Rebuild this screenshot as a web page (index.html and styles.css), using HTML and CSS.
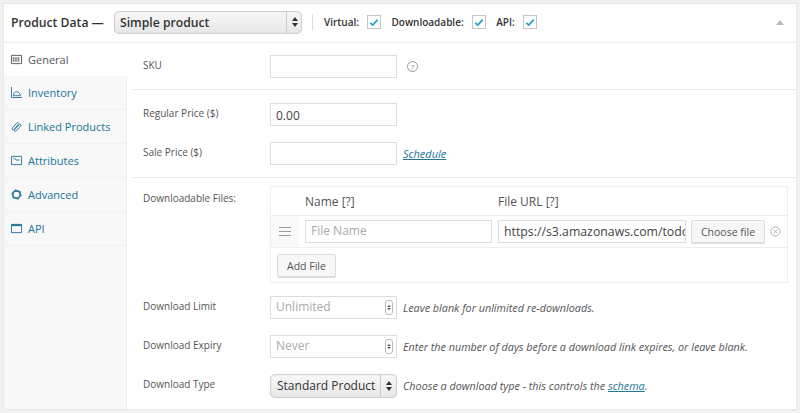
FILE: index.html
```html
<!DOCTYPE html>
<html lang="en">
<head>
  <meta charset="UTF-8">
  <title>Product Data</title>
  <link rel="stylesheet" href="styles.css">
</head>
<body>
  <div class="panel">
    <header class="panel-head">
      <span class="panel-title">Product Data —</span>
      <div class="select select-type">
        <span class="select-text">Simple product</span>
        <span class="select-arrows"><i class="up"></i><i class="down"></i></span>
      </div>
      <span class="head-sep"></span>
      <span class="check-label">Virtual:</span>
      <span class="check"><svg viewBox="0 0 12 10"><path d="M1.5 5.5 4.5 8.2 10.5 1.5"/></svg></span>
      <span class="check-label">Downloadable:</span>
      <span class="check"><svg viewBox="0 0 12 10"><path d="M1.5 5.5 4.5 8.2 10.5 1.5"/></svg></span>
      <span class="check-label">API:</span>
      <span class="check"><svg viewBox="0 0 12 10"><path d="M1.5 5.5 4.5 8.2 10.5 1.5"/></svg></span>
      <span class="collapse"></span>
    </header>
    <div class="panel-body">
      <ul class="tabs">
        <li class="tab active">
          <svg viewBox="0 0 12 12"><path class="ln" d="M.5 1.5h11v9H.5z"/><path class="ln" d="M2.5 3.5v5M4.5 3.5v5M6.5 3.5v5M8.5 3.5v5"/></svg>General
        </li>
        <li class="tab">
          <svg viewBox="0 0 12 12"><path class="ln" d="M.5 0v11.5H12"/><path class="ln" d="M2.5 9.5c1-6 6-6 8 0z"/></svg>Inventory
        </li>
        <li class="tab">
          <svg viewBox="0 0 12 12"><path class="ln" d="M1.5 7.500 6 2.500c1.500-1.500 3-.5 2 1.200L3.500 9c-1.500 1.500-3 .5-2-1.500z"/><path class="ln" d="M4 9.500 8.500 4.500c1.500-1.500 3-.5 2 1.200L6 10.500c-1.500 1.500-3 .5-2-1z"/></svg>Linked Products
        </li>
        <li class="tab">
          <svg viewBox="0 0 12 12"><path class="ln" d="M.5 1.500h11v9H.5z"/><path class="ln" d="M2.500 4h2l1 1.500h4"/></svg>Attributes
        </li>
        <li class="tab">
          <svg viewBox="0 0 12 12"><circle class="ln thick" cx="6" cy="6" r="4"/><circle class="ln teeth" cx="6" cy="6" r="5"/></svg>Advanced
        </li>
        <li class="tab">
          <svg viewBox="0 0 12 12"><path class="ln" d="M.5 1.500h11v9H.5z"/><path class="ln thick" d="M.5 2.500h11"/></svg>API
        </li>
      </ul>
      <div class="form">
        <section class="group group-sku">
          <div class="field">
            <label>SKU</label>
            <span class="input"></span>
            <span class="help">?</span>
          </div>
        </section>
        <section class="group group-price">
          <div class="field">
            <label>Regular Price ($)</label>
            <span class="input">0.00</span>
          </div>
          <div class="field">
            <label>Sale Price ($)</label>
            <span class="input"></span>
            <a class="schedule">Schedule</a>
          </div>
        </section>
        <section class="group group-files">
          <div class="files-row">
            <label>Downloadable Files:</label>
            <div class="files">
              <div class="files-head">
                <span class="col-name">Name [?]</span>
                <span>File URL [?]</span>
              </div>
              <div class="files-line">
                <span class="drag"><i></i><i></i><i></i></span>
                <span class="input input-name placeholder">File Name</span>
                <span class="input input-url">https://s3.amazonaws.com/todo</span>
                <span class="btn">Choose file</span>
                <span class="remove"><svg viewBox="0 0 12 12"><circle cx="6" cy="6" r="5"/><path d="M4 4l4 4M8 4l-4 4"/></svg></span>
              </div>
              <div class="files-foot"><span class="btn">Add File</span></div>
            </div>
          </div>
          <div class="field">
            <label>Download Limit</label>
            <span class="input placeholder spin-input">Unlimited<span class="spin"><i class="up"></i><i class="down"></i></span></span>
            <em>Leave blank for unlimited re-downloads.</em>
          </div>
          <div class="field">
            <label>Download Expiry</label>
            <span class="input placeholder spin-input">Never<span class="spin"><i class="up"></i><i class="down"></i></span></span>
            <em>Enter the number of days before a download link expires, or leave blank.</em>
          </div>
          <div class="field">
            <label>Download Type</label>
            <div class="select select-dl">
              <span class="select-text">Standard Product</span>
              <span class="select-arrows"><i class="up"></i><i class="down"></i></span>
            </div>
            <em>Choose a download type - this controls the <a class="schema">schema</a>.</em>
          </div>
        </section>
      </div>
    </div>
  </div>
</body>
</html>
```

FILE: styles.css
```css
* { box-sizing: border-box; margin: 0; padding: 0; }
html, body { height: 100%; overflow: hidden; }
body { background: #f1f1f1; font-family: "Open Sans", sans-serif; color: #444; padding: 3px 3px 0; }

.panel { background: #fff; height: 407px; border: 1px solid #e8e8e8; display: flex; flex-direction: column; }

/* header */
.panel-head { height: 39px; border-bottom: 1px solid #eee; display: flex; align-items: center; padding: 0 0 2px 7px; flex: none; }
.panel-title { font-size: 12.200px; font-weight: 600; color: #333; width: 103px; flex: none; white-space: nowrap; }
.select { display: flex; align-items: center; border-radius: 5px; background: linear-gradient(#f8f8f8, #e6e6e6); box-shadow: 0 0 1px 1px #ccc inset; color: #333; height: 23px; flex: none; }
.select-text { flex: 1; white-space: nowrap; }
.select-arrows { width: 16px; height: 100%; border-left: 1px solid #ccc; display: flex; flex-direction: column; align-items: center; justify-content: center; gap: 2px; flex: none; }
.up { width: 0; height: 0; border: 3px solid transparent; border-top: 0; border-bottom: 4px solid #333; }
.down { width: 0; height: 0; border: 3px solid transparent; border-bottom: 0; border-top: 4px solid #333; }
.select-type { width: 188px; font-size: 12.200px; font-weight: 600; padding-left: 6px; }
.head-sep { width: 1px; height: 16px; background: #ddd; margin: 0 11px 0 10px; flex: none; }
.check-label { font-size: 10px; font-weight: 600; color: #333; white-space: nowrap; }
.check { width: 14px; height: 14px; border: 1px solid #c4c4c4; background: #fff; margin: 0 10.500px 0 8px; display: flex; align-items: center; justify-content: center; flex: none; }
.check svg { width: 10px; height: 9px; fill: none; stroke: #1aa5c4; stroke-width: 2; }
.collapse { margin: 0 12px 0 auto; width: 0; height: 0; border: 4px solid transparent; border-top: 0; border-bottom: 5px solid #bbb; }

.panel-body { flex: 1; display: flex; min-height: 0; }

/* tabs */
.tabs { width: 123px; flex: none; list-style: none; background: #f8f8f8; border-right: 1px solid #eee; }
.tab { height: 34px; display: flex; align-items: center; padding-left: 7px; font-size: 11px; color: #21759b; border-bottom: 1px solid #f1f1f1; padding-bottom: 1px; }
.tab svg { width: 11px; height: 11px; margin-right: 6px; flex: none; color: #21759b; overflow: visible; }
.tab .ln { fill: none; stroke: currentColor; stroke-width: 1; }
.tab .thick { stroke-width: 1.800; }
.tab .teeth { stroke-width: 1.200; stroke-dasharray: 2 3.230; }
.tab.active { background: #fff; color: #555; height: 33px; width: 124px; border-bottom: 0; }
.tab.active svg { color: #555; }

/* form */
.form { flex: 1; min-width: 0; font-size: 10px; color: #555; padding-left: 5px; }
.group { border-bottom: 1px solid #e8e8e8; }
.group-sku { padding: 12px 0 11px; }
.group-price { padding: 13px 0 12px; }
.group-price .field + .field { margin-top: 16px; }
.group-files { padding-top: 8px; border-bottom: 0; }
.field { display: flex; align-items: center; height: 23px; }
label { width: 138px; padding-left: 11px; flex: none; font-size: 10px; padding-bottom: 3px; }
.input { width: 127px; height: 23px; border: 1px solid #ddd; background: #fff; display: block; font-size: 12px; line-height: 23px; padding: 0 5px; color: #444; white-space: nowrap; overflow: hidden; flex: none; }
.placeholder { color: #aaa; line-height: 20px; }
.help { width: 11px; height: 11px; border: 1px solid #999; border-radius: 50%; margin-left: 10px; font-size: 8px; color: #888; display: flex; align-items: center; justify-content: center; flex: none; }
.schedule { margin-left: 6px; font-size: 11px; font-style: italic; color: #21759b; text-decoration: underline; }
em { font-size: 10.800px; margin-left: 6px; color: #555; white-space: nowrap; }
.schema { color: #21759b; text-decoration: underline; }

/* downloadable files */
.files-row { display: flex; margin-bottom: 13px; }
.files-row label { padding-top: 5px; }
.files { width: 518px; height: 97px; border: 1px solid #eee; flex: none; }
.files-head { height: 28px; display: flex; align-items: center; font-size: 12px; }
.col-name { margin-left: 34px; width: 193px; }
.files-line { height: 33px; background: #fff; border-top: 1px solid #eee; border-bottom: 1px solid #eee; display: flex; align-items: center; }
.drag { width: 28px; height: 100%; background: #f9f9f9; display: flex; flex-direction: column; align-items: center; justify-content: center; gap: 3px; margin-right: 6px; flex: none; }
.drag i { width: 12px; height: 1px; background: #999; }
.input-name { width: 187px; margin-right: 6px; }
.input-url { width: 188px; font-size: 12.300px; line-height: 22px; margin-right: 5px; }
.btn { display: inline-block; height: 23px; line-height: 22px; padding: 0 9px; font-size: 10.500px; background: #f7f7f7; border: 1px solid #ddd; border-radius: 2px; color: #555; box-shadow: 0 1px 0 #ddd; white-space: nowrap; flex: none; }
.remove { margin-left: 5px; }
.remove svg { display: block; width: 11px; height: 11px; fill: none; stroke: #aaa; stroke-width: 1; }
.files-foot { padding: 6px; }

.group-files .field + .field { margin-top: 16px; }
.spin-input { position: relative; }
.spin { position: absolute; right: 3px; top: 3px; width: 8px; height: 15px; border: 1px solid #bbb; border-radius: 3px; display: flex; flex-direction: column; align-items: center; justify-content: center; gap: 1px; }
.spin .up { border-width: 2px; border-top: 0; border-bottom: 2px solid #555; }
.spin .down { border-width: 2px; border-bottom: 0; border-top: 2px solid #555; }
.select-dl { width: 127px; font-size: 12px; padding-left: 7px; height: 24px; }
.select-dl .select-arrows { width: 17px; }
.select-dl .select-text { overflow: hidden; }
```
